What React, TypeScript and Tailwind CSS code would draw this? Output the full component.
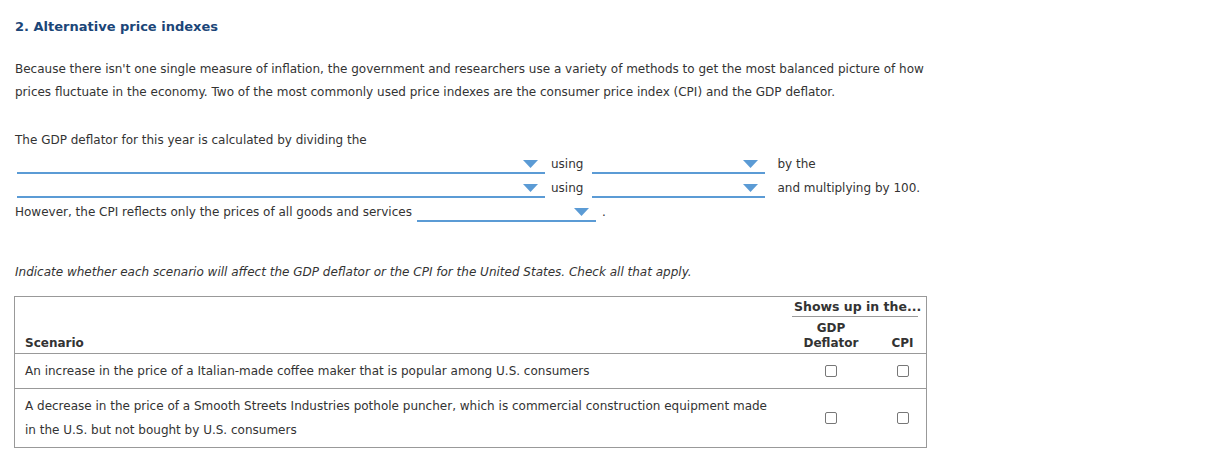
import React from "react";

function Drop({ w }: { w: number }) {
  return (
    <span className="relative inline-block h-[20px] border-b-2 border-[#5b9bd5]" style={{ width: w }}>
      <svg className="absolute right-[7px] top-[6px]" width="15" height="8" viewBox="0 0 15 8">
        <path d="M0 0 L15 0 L7.5 8 Z" fill="#5b9bd5" />
      </svg>
    </span>
  );
}

function Box() {
  return <span className="inline-block w-[12px] h-[12px] border border-[#777] rounded-[2px] bg-white" />;
}

export default function App() {
  return (
    <div className="w-[1207px] h-[457px] bg-white text-[#333] text-[12px] pl-[15px] pt-[18px]" style={{ fontFamily: '"DejaVu Sans", Verdana, sans-serif' }}>
      <div className="text-[13px] font-bold text-[#1b4678] leading-[18px]">2. Alternative price indexes</div>
      <div className="mt-[22px] leading-[23px] w-[930px]">
        Because there isn't one single measure of inflation, the government and researchers use a variety of methods to get the most balanced picture of how prices fluctuate in the economy. Two of the most commonly used price indexes are the consumer price index (CPI) and the GDP deflator.
      </div>
      <div className="mt-[27px] leading-[18px]">The GDP deflator for this year is calculated by dividing the</div>
      <div className="mt-[1px] flex items-end h-[24px] pl-[2px]">
        <Drop w={528} />
        <span className="ml-[6px] mr-[9px] leading-[20px]">using</span>
        <Drop w={173} />
        <span className="ml-[12px] leading-[20px]">by the</span>
      </div>
      <div className="flex items-end h-[24px] pl-[2px]">
        <Drop w={528} />
        <span className="ml-[6px] mr-[9px] leading-[20px]">using</span>
        <Drop w={173} />
        <span className="ml-[12px] leading-[20px]">and multiplying by 100.</span>
      </div>
      <div className="flex items-end h-[24px]">
        <span className="leading-[20px] mr-[5px]">However, the CPI reflects only the prices of all goods and services</span>
        <Drop w={179} />
        <span className="ml-[6px] leading-[20px]">.</span>
      </div>
      <div className="mt-[38px] italic leading-[24px]">Indicate whether each scenario will affect the GDP deflator or the CPI for the United States. Check all that apply.</div>
      <div className="mt-[12px] w-[913px] -ml-[1px] border border-[#999]">
        <div className="grid grid-cols-[776px_80px_55px] border-b border-[#999] h-[57px]">
          <div className="flex items-end pl-[10px] pb-[2px] font-bold leading-[16px]">Scenario</div>
          <div className="col-span-2 flex flex-col">
            <div className="mt-[1px] mr-[8px] ml-[1px] border-b border-[#999] font-bold text-[12.5px] leading-[17px] pb-[1px] pl-[2px] whitespace-nowrap">Shows up in the...</div>
            <div className="grid grid-cols-[80px_55px] flex-1 font-bold leading-[15px] pb-[2px]">
              <div className="flex items-end justify-center text-center">GDP<br />Deflator</div>
              <div className="flex items-end justify-center pl-[8px]">CPI</div>
            </div>
          </div>
        </div>
        <div className="grid grid-cols-[776px_80px_55px] border-b border-[#999] h-[35px] items-center">
          <div className="pl-[10px] pr-[14px] leading-[24px]">An increase in the price of a Italian-made coffee maker that is popular among U.S. consumers</div>
          <div className="flex justify-center"><Box /></div>
          <div className="flex justify-center pl-[8px]"><Box /></div>
        </div>
        <div className="grid grid-cols-[776px_80px_55px] h-[58px] items-center">
          <div className="pl-[10px] pr-[14px] leading-[24px]">A decrease in the price of a Smooth Streets Industries pothole puncher, which is commercial construction equipment made in the U.S. but not bought by U.S. consumers</div>
          <div className="flex justify-center"><Box /></div>
          <div className="flex justify-center pl-[8px]"><Box /></div>
        </div>
      </div>
    </div>
  );
}
